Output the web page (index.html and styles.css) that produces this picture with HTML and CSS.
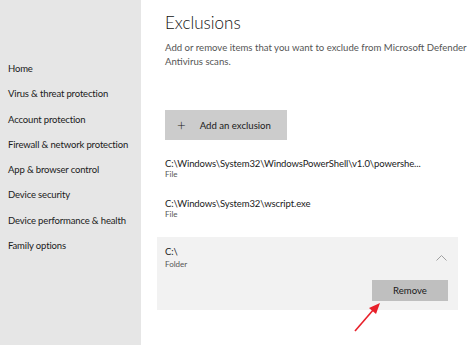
FILE: index.html
```html
<!DOCTYPE html>
<html lang="en">
<head>
    <meta charset="UTF-8">
    <title>Exclusions</title>
    <link rel="stylesheet" href="styles.css">
</head>
<body>
    <aside class="sidebar">
        <a href="#">Home</a>
        <a href="#">Virus &amp; threat protection</a>
        <a href="#">Account protection</a>
        <a href="#">Firewall &amp; network protection</a>
        <a href="#">App &amp; browser control</a>
        <a href="#">Device security</a>
        <a href="#">Device performance &amp; health</a>
        <a href="#">Family options</a>
    </aside>

    <main class="content">
        <h1 class="title">Exclusions</h1>
        <p class="desc">Add or remove items that you want to exclude from Microsoft Defender Antivirus scans.</p>

        <button class="add-btn"><span class="plus">+</span>Add an exclusion</button>

        <div class="item">
            <div class="path">C:\Windows\System32\WindowsPowerShell\v1.0\powershe...</div>
            <div class="type">File</div>
        </div>
        <div class="item">
            <div class="path">C:\Windows\System32\wscript.exe</div>
            <div class="type">File</div>
        </div>

        <div class="card">
            <div class="card-head">
                <div>
                    <div class="path">C:\</div>
                    <div class="type">Folder</div>
                </div>
                <svg class="chevron" width="11" height="6" viewBox="0 0 11 6">
                    <polyline points="0.5,5.5 5.5,0.5 10.5,5.5" fill="none" stroke="#a0a0a0" stroke-width="1"/>
                </svg>
            </div>
            <div class="card-actions">
                <button class="remove-btn">Remove</button>
            </div>
        </div>
    </main>

    <svg class="arrow" width="474" height="345" viewBox="0 0 474 345">
        <line x1="355" y1="331" x2="374" y2="309" stroke="#e8202a" stroke-width="1.6"/>
        <polygon points="380,303 369,308 376,314" fill="#e8202a"/>
    </svg>
</body>
</html>
```

FILE: styles.css
```css
body {
    margin: 0;
    font-family: 'Segoe UI', Lato, sans-serif;
    background-color: #ffffff;
    color: #1a1a1a;
    display: flex;
    height: 345px;
    overflow: hidden;
}

.sidebar {
    width: 141px;
    flex-shrink: 0;
    background-color: #e6e6e6;
    padding-top: 56px;
    display: flex;
    flex-direction: column;
    box-sizing: border-box;
}

.sidebar a {
    display: block;
    padding-left: 8px;
    line-height: 25.3px;
    font-size: 9.5px;
    letter-spacing: -0.15px;
    color: #1a1a1a;
    text-decoration: none;
    white-space: nowrap;
}

.content {
    width: 301px;
    padding-left: 16px;
    display: flex;
    flex-direction: column;
}

.title {
    margin: 11px 0 0 8px;
    font-size: 17px;
    font-weight: 300;
    line-height: 24px;
    color: #111;
}

.desc {
    width: 310px;
    margin: 6px 0 0 8px;
    font-size: 9.6px;
    line-height: 14px;
    color: #555;
}

.add-btn {
    margin: 41px 0 0 8px;
    width: 122px;
    height: 30px;
    border: none;
    background-color: #cccccc;
    font-family: inherit;
    font-size: 9.6px;
    color: #1a1a1a;
    display: flex;
    align-items: center;
    padding: 0 0 0 12px;
}

.plus {
    font-size: 15px;
    font-weight: 300;
    margin-right: 14px;
}

.item {
    margin: 18px 0 0 8px;
}

.item + .item {
    margin-top: 19px;
}

.path {
    font-size: 9.5px;
    line-height: 12px;
    letter-spacing: -0.1px;
    color: #1a1a1a;
    white-space: nowrap;
}

.type {
    font-size: 8px;
    line-height: 9px;
    color: #555;
}

.card {
    margin-top: 18px;
    background-color: #f2f2f2;
    padding: 9px 10px 9px 8px;
    display: flex;
    flex-direction: column;
}

.card-head {
    display: flex;
    justify-content: space-between;
    align-items: center;
}

.card .type {
    line-height: 12px;
}

.chevron {
    margin-right: 1px;
}

.card-actions {
    display: flex;
    justify-content: flex-end;
    margin-top: 10px;
}

.remove-btn {
    width: 76px;
    height: 21px;
    border: none;
    background-color: #bfbfbf;
    font-family: inherit;
    font-size: 9.6px;
    color: #1a1a1a;
}

.arrow {
    position: absolute;
    top: 0;
    left: 0;
    pointer-events: none;
}
```
